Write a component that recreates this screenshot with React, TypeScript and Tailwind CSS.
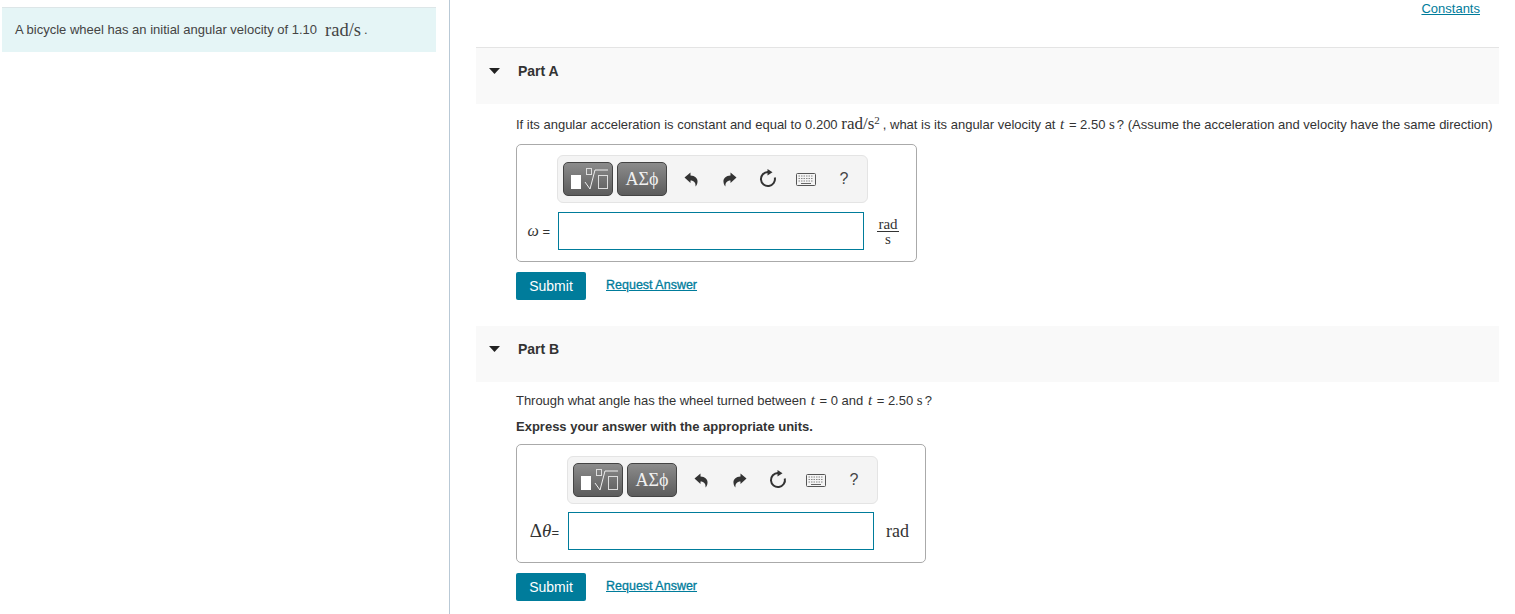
const SANS = "font-['Liberation_Sans',Arial,sans-serif]";

function MathText({ children, className = '' }: { children: React.ReactNode; className?: string }) {
  return <span className={`font-['Liberation_Serif',serif] ${className}`}>{children}</span>;
}

function Toolbar() {
  return (
    <div className="flex h-[48px] w-[311px] items-center rounded-[6px] border border-[#e4e4e4] bg-[#f4f4f4] pl-[5px]">
      <button className="flex h-[34px] w-[50px] items-center justify-center rounded-[5px] border border-[#444] bg-gradient-to-b from-[#8c8c8c] to-[#5c5c5c]">
        <svg width="44" height="28" viewBox="0 0 44 28" fill="none">
          <rect x="5" y="10" width="10" height="14" fill="#fff" />
          <rect x="20.5" y="3.5" width="5" height="6" stroke="#ddd" />
          <path d="M19 17 L24 24 L29 5 H42" stroke="#eee" strokeWidth="1" />
          <rect x="32.5" y="10.5" width="9" height="13" stroke="#ddd" />
        </svg>
      </button>
      <button className="ml-[4px] flex h-[34px] w-[50px] items-center justify-center rounded-[5px] border border-[#444] bg-gradient-to-b from-[#8c8c8c] to-[#5c5c5c] font-['Liberation_Serif',serif] text-[18px] text-[#f0f0f0]">
        ΑΣϕ
      </button>
      <div className="ml-[16px] flex w-[16px] justify-center">
        <svg width="14" height="15" viewBox="0 0 14 15" fill="#333">
          <path d="M0.5 5.5 L6.5 0.5 V3.5 C11 3.5 14 6.5 13.5 10 C13.3 12 12.5 13.5 11.5 14.5 C12 11 10 8.5 6.5 8.5 V11 Z" />
        </svg>
      </div>
      <div className="ml-[23px] flex w-[16px] justify-center">
        <svg width="14" height="15" viewBox="0 0 14 15" fill="#333">
          <path d="M13.5 5.5 L7.5 0.5 V3.5 C3 3.5 0 6.5 0.5 10 C0.7 12 1.5 13.5 2.5 14.5 C2 11 4 8.5 7.5 8.5 V11 Z" />
        </svg>
      </div>
      <div className="ml-[21px] flex w-[18px] justify-center">
        <svg width="18" height="20" viewBox="0 0 18 20" fill="none">
          <path d="M9 3 A7 7 0 1 0 15.8 8.5" stroke="#333" strokeWidth="2" />
          <path d="M8.5 0 L13.5 3.2 L8.5 6.5 Z" fill="#333" />
        </svg>
      </div>
      <div className="ml-[18px] flex w-[22px] justify-center">
        <svg width="20" height="13" viewBox="0 0 20 13" fill="none">
          <rect x="0.5" y="0.5" width="19" height="12" rx="1" fill="#f4f4f4" stroke="#555" />
          <path d="M2.5 3 H17.5 M2.5 5.5 H17.5 M2.5 8 H17.5" stroke="#888" strokeWidth="1.2" strokeDasharray="1.5 1" />
          <path d="M5 10.5 H15" stroke="#666" />
        </svg>
      </div>
      <span className={`ml-[21px] w-[12px] text-center text-[16px] text-[#444] ${SANS}`}>?</span>
    </div>
  );
}

function AnswerBox({
  label,
  unit,
  variant,
}: {
  label: React.ReactNode;
  unit: React.ReactNode;
  variant: 'a' | 'b';
}) {
  const isA = variant === 'a';
  return (
    <div className={`rounded-[5px] border border-[#aaa] ${isA ? 'w-[401px]' : 'w-[410px]'}`}>
      <div className={isA ? 'pl-[40px] pt-[10px]' : 'pl-[50px] pt-[11px]'}>
        <Toolbar />
      </div>
      <div className={`flex items-center ${isA ? 'mb-[11px] mt-[9px]' : 'mb-[12px] mt-[8px]'}`}>
        <div className={`flex justify-end ${isA ? 'w-[41px] pr-[8px]' : 'w-[51px] pr-[9px]'}`}>{label}</div>
        <div className="h-[38px] w-[306px] border border-[#007c9b] bg-white" />
        <div className="flex flex-1 justify-center pr-[4px]">{unit}</div>
      </div>
    </div>
  );
}

function Actions() {
  return (
    <div className="mt-[10px] flex items-center">
      <button className="h-[28px] w-[70px] rounded-[2px] bg-[#007c9b] text-[14px] text-white">Submit</button>
      <a className="ml-[20px] -translate-y-px text-[12.5px] text-[#007c9b] underline [-webkit-text-stroke:0.3px_#007c9b]">
        Request Answer
      </a>
    </div>
  );
}

function PartHeader({ title, first }: { title: string; first?: boolean }) {
  return (
    <div
      className={`flex items-center bg-[#f9f9f9] pb-[10px] pl-[13px] ${
        first ? 'h-[57px] border-t border-[#e4e4e4]' : 'h-[56px]'
      }`}
    >
      <svg width="11" height="6" viewBox="0 0 11 6" fill="#222">
        <path d="M0 0 H11 L5.5 6 Z" />
      </svg>
      <span className="ml-[18px] text-[14px] font-bold leading-none text-[#333]">{title}</span>
    </div>
  );
}

export default function App() {
  return (
    <div className={`flex h-[614px] overflow-hidden bg-white text-[#333] ${SANS}`}>
      <aside className="h-full w-[450px] shrink-0 border-r border-[#b9c9d6] pl-[2px] pr-[13px] pt-[7px]">
        <div className="flex h-[45px] items-center border-t border-[#dde6e8] bg-[#e5f5f6] pl-[13px] text-[13px] text-[#444]">
          A bicycle wheel has an initial angular velocity of 1.10
          <MathText className="ml-[8px] text-[18.5px] leading-none">rad/s</MathText>
          <span className="ml-[3px]">.</span>
        </div>
      </aside>

      <main className="flex-1 pl-[26px] pr-[16px]">
        <div className="flex h-[47px] justify-end pr-[19px]">
          <a className="h-[17px] text-[13px] leading-[17px] text-[#007c9b] underline">Constants</a>
        </div>

        <PartHeader title="Part A" first />
        <section className="pl-[40px]">
          <p className="mt-[10px] h-[20px] whitespace-nowrap text-[13px] leading-[20px]">
            If its angular acceleration is constant and equal to 0.200{' '}
            <MathText className="mr-[3px] text-[17px]">
              rad/s<sup className="text-[11px]">2</sup>
            </MathText>
            , what is its angular velocity at <MathText className="mx-[1px] text-[15px] italic">t</MathText> = 2.50{' '}
            <MathText className="mr-[2px] text-[15px]">s</MathText>? (Assume the acceleration and velocity have the
            same direction)
          </p>
          <div className="mt-[10px]">
            <AnswerBox
              variant="a"
              label={
                <span className="text-[13px]">
                  <MathText className="text-[16px] italic">ω</MathText> =
                </span>
              }
              unit={
                <MathText className="flex flex-col items-center text-[15px] leading-[14px]">
                  <span className="border-b border-[#333] px-[1px]">rad</span>
                  <span>s</span>
                </MathText>
              }
            />
          </div>
          <Actions />
        </section>

        <div className="mt-[26px]">
          <PartHeader title="Part B" />
        </div>
        <section className="pl-[40px]">
          <p className="mt-[8px] h-[20px] text-[13px] leading-[20px]">
            <span className="tracking-[-0.04px]">Through what angle has the wheel turned between</span>{' '}
            <MathText className="mx-[1px] text-[15px] italic">t</MathText> = 0 and{' '}
            <MathText className="mx-[1px] text-[15px] italic">t</MathText> = 2.50{' '}
            <MathText className="mr-[2px] text-[15px]">s</MathText>?
          </p>
          <p className="mt-[7px] h-[20px] text-[13px] font-bold leading-[20px]">
            Express your answer with the appropriate units.
          </p>
          <div className="mt-[7px]">
            <AnswerBox
              variant="b"
              label={
                <span className="text-[13px]">
                  <MathText className="text-[19px]">Δ</MathText>
                  <MathText className="text-[19px] italic">θ</MathText>=
                </span>
              }
              unit={<MathText className="text-[18px]">rad</MathText>}
            />
          </div>
          <Actions />
        </section>
      </main>
    </div>
  );
}
